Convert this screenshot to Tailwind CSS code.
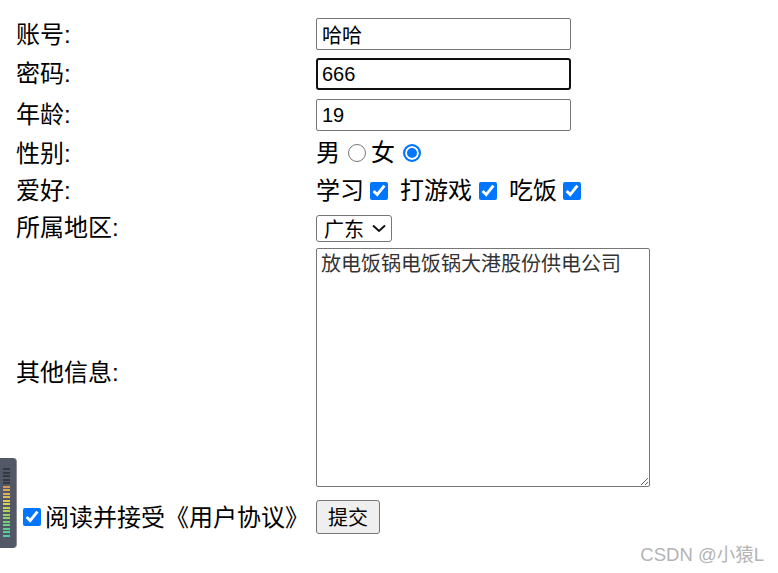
<!DOCTYPE html>
<html lang="zh-CN">
<head>
  <meta charset="UTF-8">
  <title>表单</title>
  <script src="https://cdn.jsdelivr.net/npm/@tailwindcss/browser@4"></script>
</head>
<body class="relative w-[778px] h-[573px] overflow-hidden bg-white text-black font-['Liberation_Sans','Noto_Sans_CJK_SC',sans-serif]">
  <form class="grid grid-cols-[300px_auto] items-center justify-start pl-4 pt-[18px] text-[24px] leading-[28px]">
    <!-- 账号 -->
    <label class="h-[32px] leading-[34px]">账号:</label>
    <input type="text" value="哈哈" class="w-[255px] h-[32px] pl-[5px] text-[20px] border border-[#767676] rounded-[2px]">

    <label class="h-[32px] mt-[8px] leading-[32px]">密码:</label>
    <input type="text" value="666" class="mt-[8px] w-[255px] h-[32px] pl-[4px] text-[20px] border-2 border-[#101010] rounded-[3px] outline-none">

    <label class="h-[32px] mt-[9px] leading-[32px]">年龄:</label>
    <input type="text" value="19" class="mt-[9px] w-[255px] h-[32px] pl-[5px] text-[20px] border border-[#767676] rounded-[2px]">

    <label class="h-[28px] mt-[8px] leading-[30px]">性别:</label>
    <div class="h-[28px] mt-[8px] flex items-center">
      <span>男</span>
      <input type="radio" name="sex" class="appearance-none w-[18px] h-[18px] ml-[8px] mr-[5px] rounded-full border-[1.5px] border-[#767676] checked:border-2 checked:border-[#0075ff] checked:bg-[#0075ff] checked:shadow-[inset_0_0_0_2px_white]">
      <span>女</span>
      <input type="radio" name="sex" checked class="appearance-none w-[18px] h-[18px] ml-[8px] rounded-full border-[1.5px] border-[#767676] checked:border-2 checked:border-[#0075ff] checked:bg-[#0075ff] checked:shadow-[inset_0_0_0_2px_white]">
    </div>

    <label class="h-[28px] mt-[10px]">爱好:</label>
    <div class="h-[28px] mt-[10px] flex items-center">
      <span>学习</span>
      <input type="checkbox" checked class="w-[18px] h-[18px] ml-[6px] mr-[12px] accent-[#0075ff]">
      <span>打游戏</span>
      <input type="checkbox" checked class="w-[18px] h-[18px] ml-[7px] mr-[12px] accent-[#0075ff]">
      <span>吃饭</span>
      <input type="checkbox" checked class="w-[18px] h-[18px] ml-[6px] accent-[#0075ff]">
    </div>

    <label class="h-[28px] mt-[9px]">所属地区:</label>
    <div class="relative mt-[9px] w-[76px] h-[27px]">
      <select class="appearance-none w-full h-full text-[20px] leading-[26px] pt-px pl-[7px] bg-white border border-[#767676] rounded-[3px]">
        <option>广东</option>
      </select>
      <svg class="absolute right-[6px] top-[9px] w-[14px] h-[9px] pointer-events-none" viewBox="0 0 14 9" fill="none" stroke="#111" stroke-width="2"><path d="M1 1.5 L7 7 L13 1.5"/></svg>
    </div>

    <label class="mt-[5px] pt-[11px]">其他信息:</label>
    <textarea class="block mt-[6px] w-[334px] h-[239px] px-[4px] pt-[2px] text-[20px] leading-[26px] text-[#333] border border-[#767676] rounded-[2px]">放电饭锅电饭锅大港股份供电公司</textarea>

    <div class="mt-[13px] h-[34px] pl-[7px] flex items-center">
      <input type="checkbox" checked class="w-[18px] h-[18px] mr-[4px] accent-[#0075ff]">
      <span class="pt-[2px]">阅读并接受《用户协议》</span>
    </div>
    <button type="button" class="mt-[13px] w-[64px] h-[34px] pt-[2px] text-[20px] bg-[#efefef] border border-[#767676] rounded-[3px]">提交</button>
  </form>

  <!-- 左侧音量浮窗 -->
  <div class="absolute left-0 top-[458px] w-[17px] h-[90px] bg-[#525866] rounded-r-[4px] flex flex-col gap-[1.5px] pl-[3px] pt-[10px] border-r border-[#8a8d94]">
    <div class="w-[7px] h-[2px] bg-[#343841]"></div>
    <div class="w-[7px] h-[2px] bg-[#343841]"></div>
    <div class="w-[7px] h-[2px] bg-[#343841]"></div>
    <div class="w-[7px] h-[2px] bg-[#343841]"></div>
    <div class="w-[7px] h-[2px] bg-[#343841]"></div>
    <div class="w-[7px] h-[2px] bg-[#d8985a]"></div>
    <div class="w-[7px] h-[2px] bg-[#dba45a]"></div>
    <div class="w-[7px] h-[2px] bg-[#dcb058]"></div>
    <div class="w-[7px] h-[2px] bg-[#dcbc56]"></div>
    <div class="w-[7px] h-[2px] bg-[#dcc854]"></div>
    <div class="w-[7px] h-[2px] bg-[#d6cf54]"></div>
    <div class="w-[7px] h-[2px] bg-[#c6cf58]"></div>
    <div class="w-[7px] h-[2px] bg-[#b4cf5c]"></div>
    <div class="w-[7px] h-[2px] bg-[#a0cf64]"></div>
    <div class="w-[7px] h-[2px] bg-[#8ccf6c]"></div>
    <div class="w-[7px] h-[2px] bg-[#78cf78]"></div>
    <div class="w-[7px] h-[2px] bg-[#68cf84]"></div>
    <div class="w-[7px] h-[2px] bg-[#5ccf90]"></div>
    <div class="w-[7px] h-[2px] bg-[#54cf9c]"></div>
    <div class="w-[7px] h-[2px] bg-[#50cfa8]"></div>
  </div>

  <!-- 水印 -->
  <div class="absolute right-[14px] top-[544px] text-[18.5px] leading-[21px] text-[#b4b4b4]">CSDN @小猿L</div>
</body>
</html>
